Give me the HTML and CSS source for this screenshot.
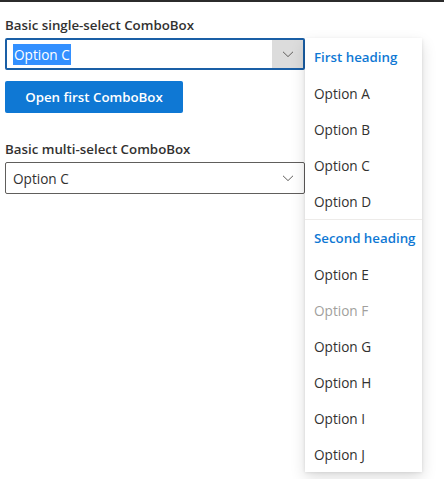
FILE: index.html
```html
<!DOCTYPE html>
<html>
<head>
<meta charset="utf-8">
<link rel="stylesheet" href="styles.css">
</head>
<body>
<div class="topbar"></div>
<div class="page">
  <div class="field">
    <label class="label">Basic single-select ComboBox</label>
    <div class="combo focused">
      <span class="value"><span class="sel">Option C</span></span>
      <span class="caret grey">
        <svg width="12" height="12" viewBox="0 0 12 12"><path d="M1 3.8 L6 8.6 L11 3.8" fill="none" stroke="#605e5c" stroke-width="1"/></svg>
      </span>
    </div>
  </div>
  <button class="primary">Open first ComboBox</button>
  <div class="field second">
    <label class="label">Basic multi-select ComboBox</label>
    <div class="combo">
      <span class="value">Option C</span>
      <span class="caret">
        <svg width="12" height="12" viewBox="0 0 12 12"><path d="M1 3.8 L6 8.6 L11 3.8" fill="none" stroke="#605e5c" stroke-width="1"/></svg>
      </span>
    </div>
  </div>
</div>
<div class="callout">
  <div class="item header">First heading</div>
  <div class="item">Option A</div>
  <div class="item">Option B</div>
  <div class="item">Option C</div>
  <div class="item">Option D</div>
  <div class="divider"></div>
  <div class="item header">Second heading</div>
  <div class="item">Option E</div>
  <div class="item disabled">Option F</div>
  <div class="item">Option G</div>
  <div class="item">Option H</div>
  <div class="item">Option I</div>
  <div class="item">Option J</div>
</div>
</body>
</html>
```
FILE: styles.css
```css
html, body {
  margin: 0;
  padding: 0;
  background: #fff;
  font-family: "Open Sans", "Noto Sans", sans-serif;
  color: #323130;
  font-size: 14px;
}
.topbar {
  height: 2px;
  background: #2b2b2b;
}
.page {
  padding: 8px 0 0 5px;
  width: 300px;
}
.field {
  display: flex;
  flex-direction: column;
}
.label {
  font-size: 13.3px;
  font-weight: 600;
  line-height: 20px;
  padding: 5px 0 3px;
  color: #323130;
}
.combo {
  box-sizing: border-box;
  height: 32px;
  width: 300px;
  border: 1px solid #605e5c;
  border-radius: 2px;
  display: flex;
  align-items: stretch;
  background: #fff;
}
.combo.focused {
  border: 2px solid #1a5fa6;
}
.value {
  flex: 1;
  display: flex;
  align-items: center;
  padding-left: 7px;
  font-size: 13.6px;
  color: #323130;
}
.combo.focused .value {
  padding-left: 6px;
}
.sel {
  background: #3390ff;
  color: #fff;
  line-height: 21px;
  padding: 0 1px;
}
.caret {
  width: 32px;
  display: flex;
  align-items: center;
  justify-content: center;
}
.caret.grey {
  background: #dcdcdc;
  width: 31px;
}
.primary {
  margin-top: 11px;
  box-sizing: border-box;
  width: 178px;
  height: 32px;
  border: none;
  border-radius: 2px;
  background: #0f78d4;
  color: #fff;
  font-family: "Open Sans", "Noto Sans", sans-serif;
  font-size: 13.3px;
  font-weight: 600;
  padding: 0;
}
.second {
  margin-top: 21px;
}
.callout {
  position: absolute;
  left: 305px;
  top: 38px;
  width: 117px;
  background: #fff;
  box-shadow: 0 6.4px 14.4px rgba(0,0,0,0.132), 0 1.2px 3.6px rgba(0,0,0,0.108);
}
.item {
  height: 36px;
  display: flex;
  align-items: center;
  padding: 0 8px 0 9px;
  font-size: 13.6px;
  color: #323130;
  white-space: nowrap;
}
.item.header {
  color: #0f78d4;
  font-weight: 600;
  font-size: 13.3px;
}
.item.header:first-child {
  height: 37px;
}
.item.disabled {
  color: #a19f9d;
}
.divider {
  height: 1px;
  background: #edebe9;
}
```
